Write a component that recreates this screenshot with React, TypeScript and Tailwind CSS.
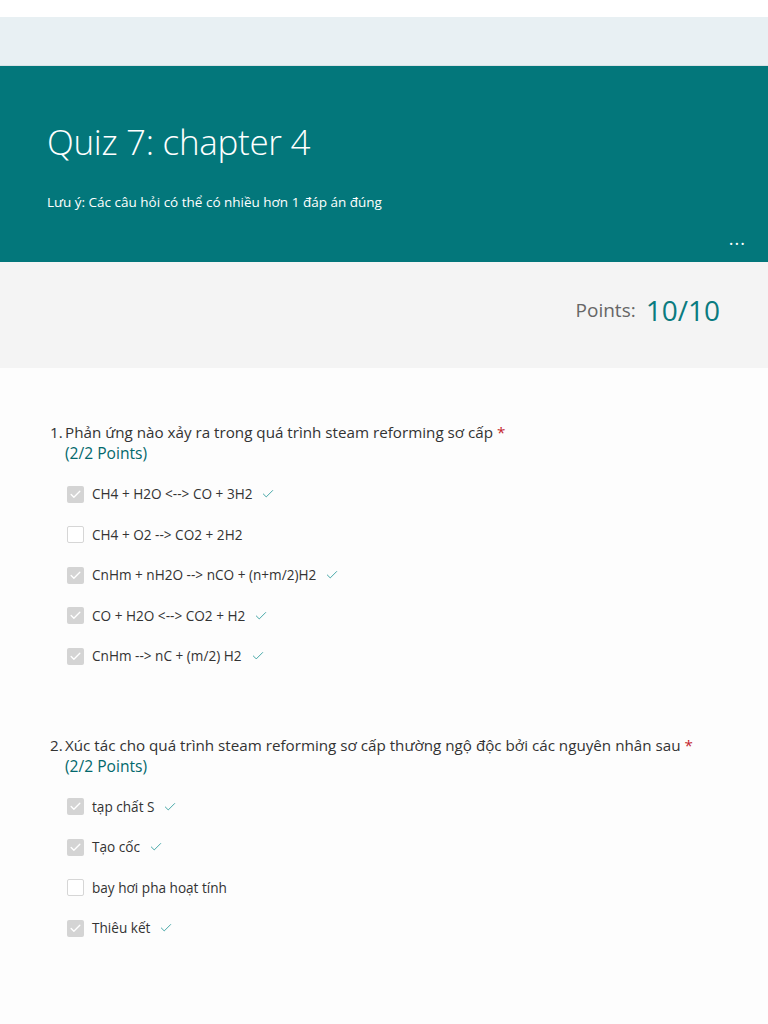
import { Check } from "lucide-react";

interface Option {
  label: string;
  checked: boolean;
}

interface Question {
  no: number;
  title: string;
  points: string;
  options: Option[];
}

const questions: Question[] = [
  {
    no: 1,
    title: "Phản ứng nào xảy ra trong quá trình steam reforming sơ cấp",
    points: "(2/2 Points)",
    options: [
      { label: "CH4 + H2O <--> CO + 3H2", checked: true },
      { label: "CH4 + O2 --> CO2 + 2H2", checked: false },
      { label: "CnHm + nH2O --> nCO + (n+m/2)H2", checked: true },
      { label: "CO + H2O <--> CO2 + H2", checked: true },
      { label: "CnHm --> nC + (m/2) H2", checked: true },
    ],
  },
  {
    no: 2,
    title: "Xúc tác cho quá trình steam reforming sơ cấp thường ngộ độc bởi các nguyên nhân sau",
    points: "(2/2 Points)",
    options: [
      { label: "tạp chất S", checked: true },
      { label: "Tạo cốc", checked: true },
      { label: "bay hơi pha hoạt tính", checked: false },
      { label: "Thiêu kết", checked: true },
    ],
  },
];

function OptionRow({ option }: { option: Option }) {
  return (
    <div className="flex items-center h-[40.5px]">
      {option.checked ? (
        <div className="w-[17px] h-[17px] rounded-[2px] bg-[#d4d4d4] flex items-center justify-center">
          <Check size={13} strokeWidth={2.5} className="text-white" />
        </div>
      ) : (
        <div className="w-[17px] h-[17px] rounded-[2px] bg-white border border-[#d6d6d6]" />
      )}
      <span className="ml-[8px] text-[13.6px] text-[#333]">{option.label}</span>
      {option.checked && (
        <Check size={14} strokeWidth={1.5} className="ml-[9px] text-[#2d9a9a]" />
      )}
    </div>
  );
}

function QuestionBlock({ q }: { q: Question }) {
  return (
    <div className="pl-[50px]">
      <div className="flex text-[15.2px] leading-[21px] text-[#333]">
        <span className="w-[15px]">{q.no}.</span>
        <div>
          <div>
            {q.title} <span className="text-[#c4262e]">*</span>
          </div>
          <div className="text-[15.6px] text-[#03686c]">{q.points}</div>
        </div>
      </div>
      <div className="mt-[10px] pl-[17px]">
        {q.options.map((o) => (
          <OptionRow key={o.label} option={o} />
        ))}
      </div>
    </div>
  );
}

export default function App() {
  return (
    <div
      className="w-[768px] h-[1024px] bg-[#fdfdfd] overflow-hidden"
      style={{ fontFamily: '"Open Sans", "Noto Sans", sans-serif' }}
    >
      <div className="h-[17px] bg-white" />
      <div className="h-[49px] bg-[#e8f0f3] border-b border-[#d8e2e5]" />

      {/* Header */}
      <div className="relative h-[196px] bg-[#03777b] text-white px-[47px] pt-[52px]">
        <h1 className="text-[35px] leading-[48px] font-light tracking-[-0.3px]">Quiz 7: chapter 4</h1>
        <p className="mt-[26px] text-[13.5px]">Lưu ý: Các câu hỏi có thể có nhiều hơn 1 đáp án đúng</p>
        <div className="absolute right-[22px] bottom-[10px] text-[18px] leading-none tracking-[1px]">···</div>
      </div>

      {/* Points */}
      <div className="h-[106px] bg-[#f4f4f4] flex items-center justify-end pr-[48px] pb-[10px]">
        <span className="text-[19px] text-[#666]">Points:</span>
        <span className="ml-[10px] text-[28px] text-[#0a7b80]">10/10</span>
      </div>

      <div className="pt-[54px] flex flex-col gap-[58px]">
        {questions.map((q) => (
          <QuestionBlock key={q.no} q={q} />
        ))}
      </div>
    </div>
  );
}
